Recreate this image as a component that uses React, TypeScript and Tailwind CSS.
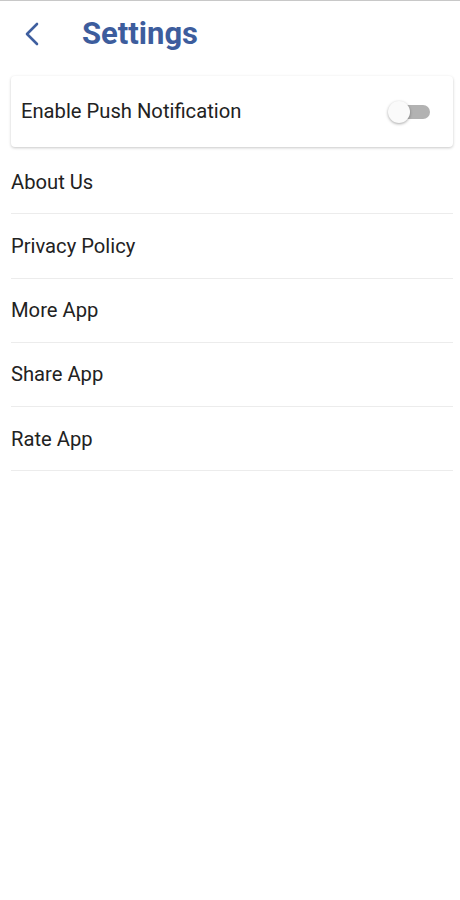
export default function App() {
  const items = ["About Us", "Privacy Policy", "More App", "Share App", "Rate App"];
  return (
    <div className="w-[460px] min-h-[899px] bg-white border-t border-[#c8c8c8]" style={{ fontFamily: "Roboto, 'Noto Sans', sans-serif" }}>
      <div className="h-[65px] flex items-center">
        <div className="w-[82px] flex items-center pl-[22px]">
          <svg width="20" height="26" viewBox="0 0 20 26" fill="none">
            <polyline points="15,3 5,13 15,23" stroke="#3f5f9f" strokeWidth="2.6" strokeLinecap="round" strokeLinejoin="round" />
          </svg>
        </div>
        <div className="text-[31px] font-bold text-[#3d5d9d] leading-none">Settings</div>
      </div>
      <div className="ml-[11px] mr-[7px] mt-[10px] h-[71px] rounded-[4px] bg-white shadow-[0_1px_3px_rgba(0,0,0,0.22)] flex items-center justify-between pl-[10px] pr-[22px]">
        <span className="text-[20.2px] text-[#222]">Enable Push Notification</span>
        <div className="relative w-[43px] h-[24px] flex items-center">
          <div className="absolute left-[8px] w-[34px] h-[14px] rounded-full bg-[#b2b2b2]" />
          <div className="absolute left-0 w-[22px] h-[22px] rounded-full bg-[#fafafa] shadow-[0_1px_3px_rgba(0,0,0,0.35)]" />
        </div>
      </div>
      <div className="ml-[11px] mr-[7px] mt-[3px]">
        {items.map((t) => (
          <div key={t} className="h-[64.3px] flex items-center border-b border-[#ececec] text-[20.2px] text-[#222]">
            <span>{t}</span>
          </div>
        ))}
      </div>
    </div>
  );
}
